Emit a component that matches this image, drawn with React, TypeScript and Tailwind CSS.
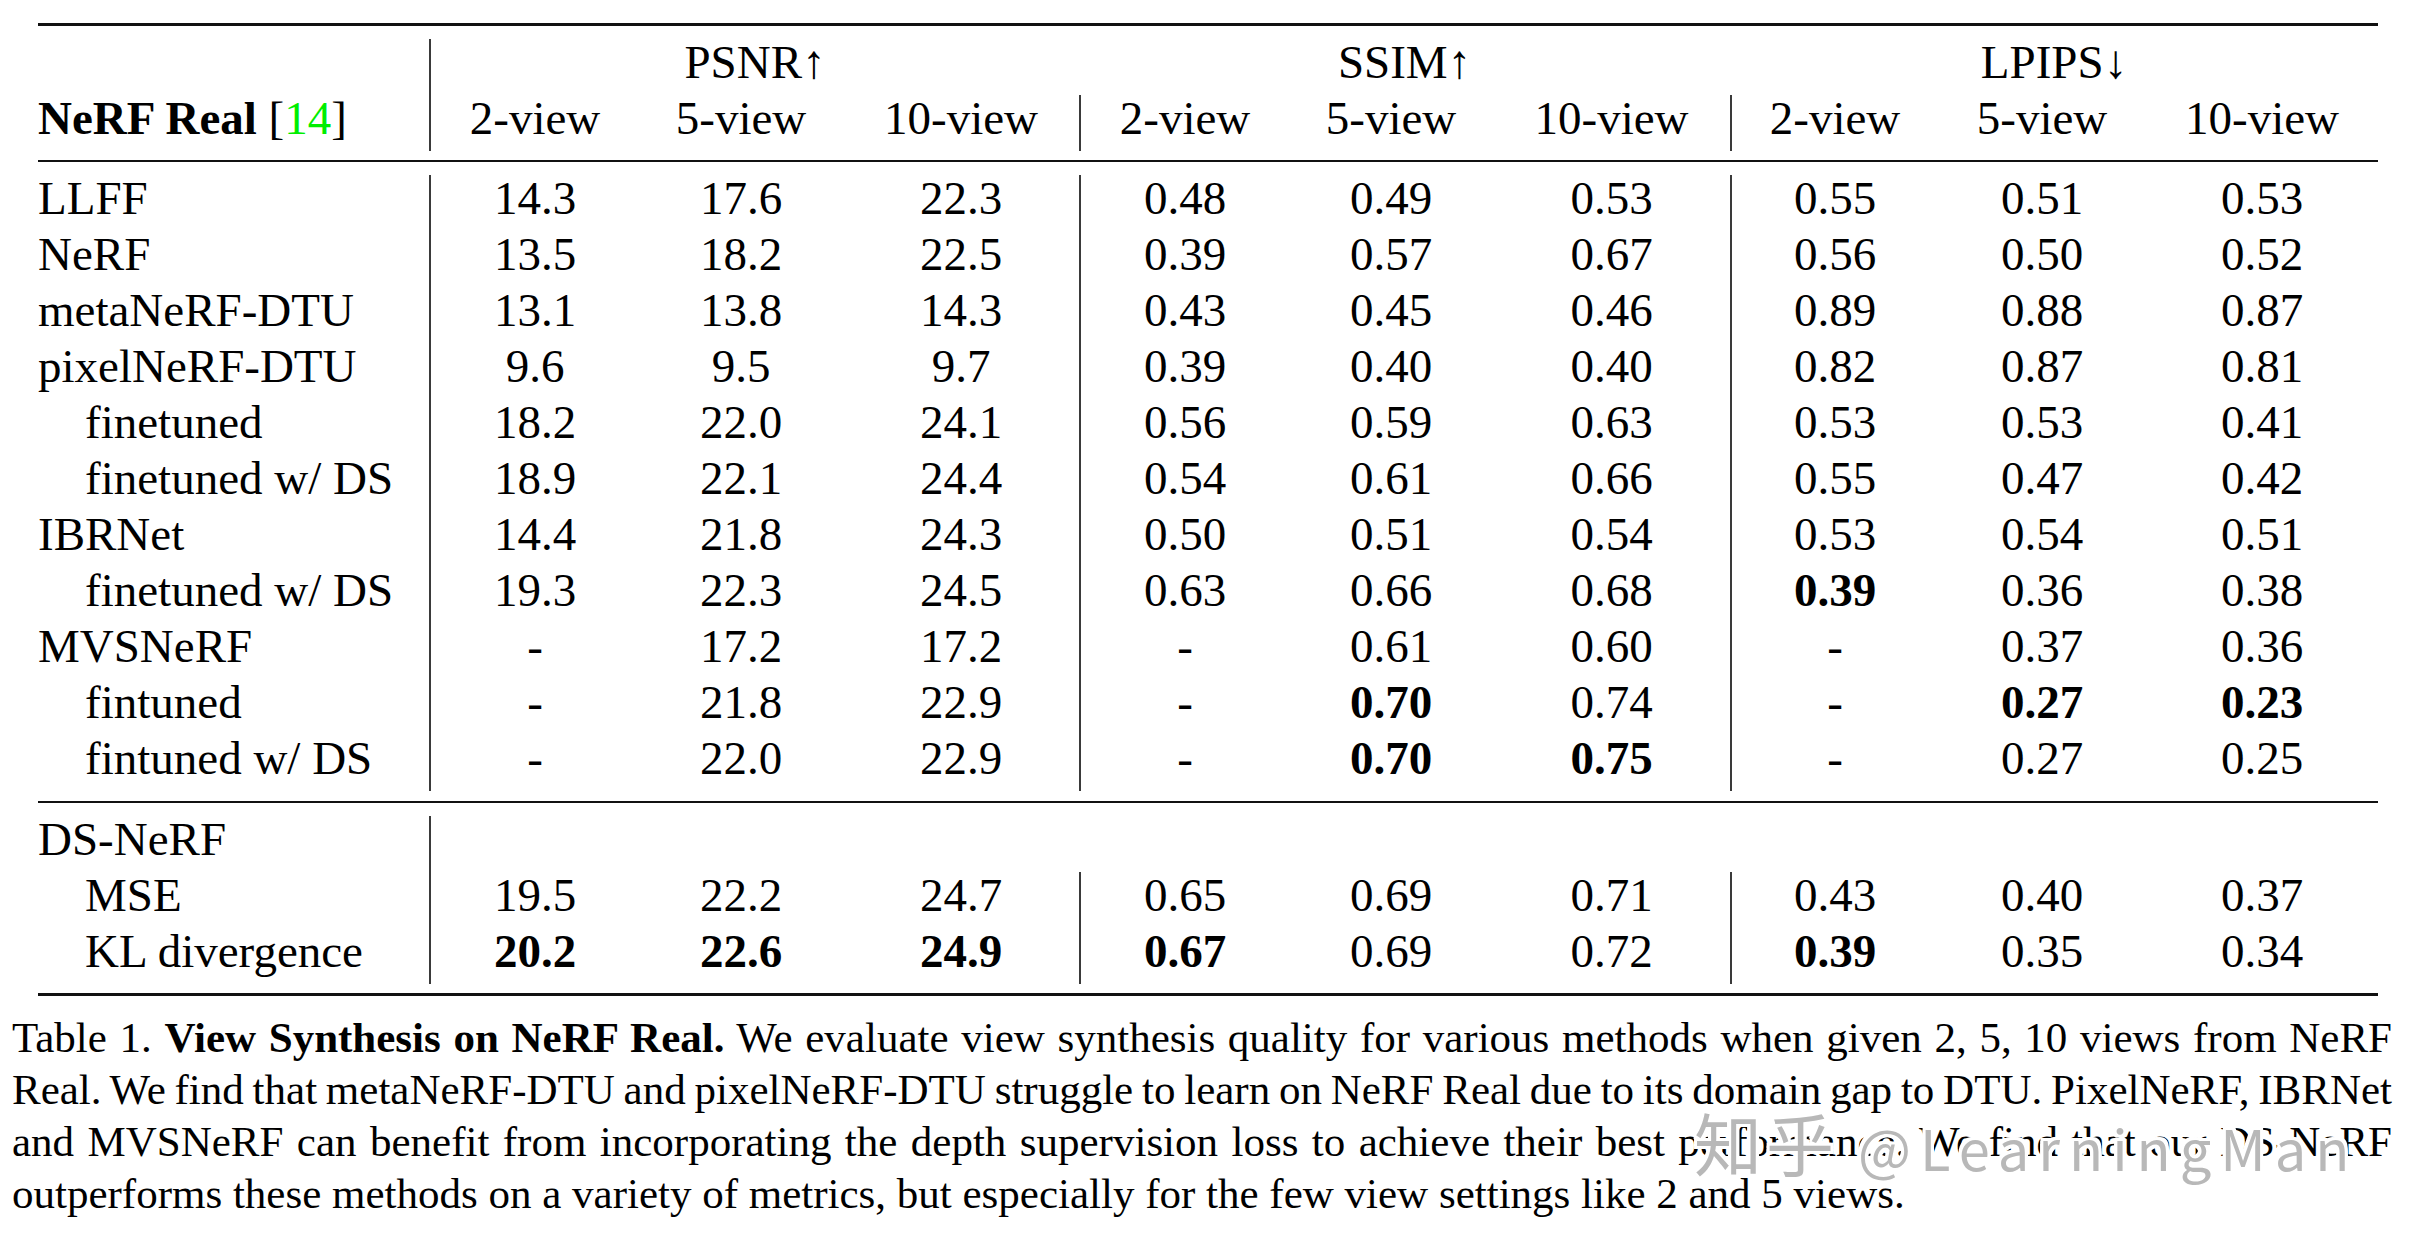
import React from "react";

// "*" at the end of a value marks a bold (best) entry
const groups = ["PSNR↑", "SSIM↑", "LPIPS↓"];
const views = ["2-view", "5-view", "10-view"];

const rows: { label: string; sub?: boolean; vals: string[] }[] = [
  { label: "LLFF", vals: ["14.3", "17.6", "22.3", "0.48", "0.49", "0.53", "0.55", "0.51", "0.53"] },
  { label: "NeRF", vals: ["13.5", "18.2", "22.5", "0.39", "0.57", "0.67", "0.56", "0.50", "0.52"] },
  { label: "metaNeRF-DTU", vals: ["13.1", "13.8", "14.3", "0.43", "0.45", "0.46", "0.89", "0.88", "0.87"] },
  { label: "pixelNeRF-DTU", vals: ["9.6", "9.5", "9.7", "0.39", "0.40", "0.40", "0.82", "0.87", "0.81"] },
  { label: "finetuned", sub: true, vals: ["18.2", "22.0", "24.1", "0.56", "0.59", "0.63", "0.53", "0.53", "0.41"] },
  { label: "finetuned w/ DS", sub: true, vals: ["18.9", "22.1", "24.4", "0.54", "0.61", "0.66", "0.55", "0.47", "0.42"] },
  { label: "IBRNet", vals: ["14.4", "21.8", "24.3", "0.50", "0.51", "0.54", "0.53", "0.54", "0.51"] },
  { label: "finetuned w/ DS", sub: true, vals: ["19.3", "22.3", "24.5", "0.63", "0.66", "0.68", "0.39*", "0.36", "0.38"] },
  { label: "MVSNeRF", vals: ["-", "17.2", "17.2", "-", "0.61", "0.60", "-", "0.37", "0.36"] },
  { label: "fintuned", sub: true, vals: ["-", "21.8", "22.9", "-", "0.70*", "0.74", "-", "0.27*", "0.23*"] },
  { label: "fintuned w/ DS", sub: true, vals: ["-", "22.0", "22.9", "-", "0.70*", "0.75*", "-", "0.27", "0.25"] },
];

const ours: { label: string; vals: string[] }[] = [
  { label: "MSE", vals: ["19.5", "22.2", "24.7", "0.65", "0.69", "0.71", "0.43", "0.40", "0.37"] },
  { label: "KL divergence", vals: ["20.2*", "22.6*", "24.9*", "0.67*", "0.69", "0.72", "0.39*", "0.35", "0.34"] },
];

const grid =
  "grid grid-cols-[391px_210px_204px_236px_210px_204px_237px_208px_208px_232px]";
const vline = "border-l-2 border-[#3a3a3a]";

function Val({ v, first }: { v: string; first: boolean }) {
  const bold = v.endsWith("*");
  return (
    <div className={`text-center ${first ? vline : ""} ${bold ? "font-bold" : ""}`}>
      {bold ? v.slice(0, -1) : v}
    </div>
  );
}

function Row({ label, sub, vals }: { label: string; sub?: boolean; vals: string[] }) {
  return (
    <div className={`${grid} h-[56px]`}>
      <div className={sub ? "pl-[47px]" : ""}>{label}</div>
      {vals.map((v, i) => (
        <Val key={i} v={v} first={i % 3 === 0} />
      ))}
    </div>
  );
}

const justified = "text-justify [text-align-last:justify] [word-spacing:-4px] whitespace-nowrap";

export default function App() {
  return (
    <div className="relative min-h-screen bg-white text-black font-['Liberation_Serif','Times_New_Roman',serif]">
      <div className="pt-[23px] ml-[38px] w-[2340px] text-[47px] leading-[46px]">
        <div className="h-[3px] bg-[#111]" />

        {/* header */}
        <div className="pt-[13px] pb-[9px]">
          <div className={`${grid} h-[56px]`}>
            <div />
            {groups.map((g, i) => (
              <div key={g} className={`col-span-3 text-center ${i === 0 ? vline : ""}`}>
                {g}
              </div>
            ))}
          </div>
          <div className={`${grid} h-[56px]`}>
            <div>
              <span className="font-bold">NeRF Real</span> [<span className="text-[#00ee00]">14</span>]
            </div>
            {groups.map((g) =>
              views.map((v, j) => (
                <div key={g + v} className={`text-center ${j === 0 ? vline : ""}`}>
                  {v}
                </div>
              ))
            )}
          </div>
        </div>
        <div className="h-[2px] bg-[#111]" />

        {/* baselines */}
        <div className="pt-[13px] pb-[10px]">
          {rows.map((r, i) => (
            <Row key={i} {...r} />
          ))}
        </div>
        <div className="h-[2px] bg-[#111]" />

        {/* DS-NeRF */}
        <div className="pt-[13px] pb-[9px]">
          <div className={`${grid} h-[56px]`}>
            <div>DS-NeRF</div>
            <div className={`col-span-9 ${vline}`} />
          </div>
          {ours.map((r) => (
            <Row key={r.label} label={r.label} sub vals={r.vals} />
          ))}
        </div>
        <div className="h-[3px] bg-[#111]" />
      </div>

      {/* caption */}
      <div className="mt-[16px] ml-[12px] w-[2380px] text-[43px] leading-[52px]">
        <div className={justified}>
          Table 1. <span className="font-bold">View Synthesis on NeRF Real.</span> We evaluate view synthesis quality for
          various methods when given 2, 5, 10 views from NeRF
        </div>
        <div className={justified}>
          Real. We find that metaNeRF-DTU and pixelNeRF-DTU struggle to learn on NeRF Real due to its domain gap to DTU.
          PixelNeRF, IBRNet
        </div>
        <div className={justified}>
          and MVSNeRF can benefit from incorporating the depth supervision loss to achieve their best performance. We find
          that our DS-NeRF
        </div>
        <div>
          outperforms these methods on a variety of metrics, but especially for the few view settings like 2 and 5 views.
        </div>
      </div>

      {/* watermark */}
      <div className="absolute left-[1694px] top-[1108px] flex items-baseline whitespace-nowrap leading-none text-[#b8b8b8] font-['Noto_Sans_CJK_SC','Noto_Sans',sans-serif] [text-shadow:3px_3px_0_#fff,-3px_-3px_0_#fff,3px_-3px_0_#fff,-3px_3px_0_#fff,0_3px_0_#fff,0_-3px_0_#fff,3px_0_0_#fff,-3px_0_0_#fff]">
        <span className="text-[68px] tracking-[4px]">知乎</span>
        <span className="ml-[20px] text-[56px] tracking-[9px]">@LearningMan</span>
      </div>
    </div>
  );
}
